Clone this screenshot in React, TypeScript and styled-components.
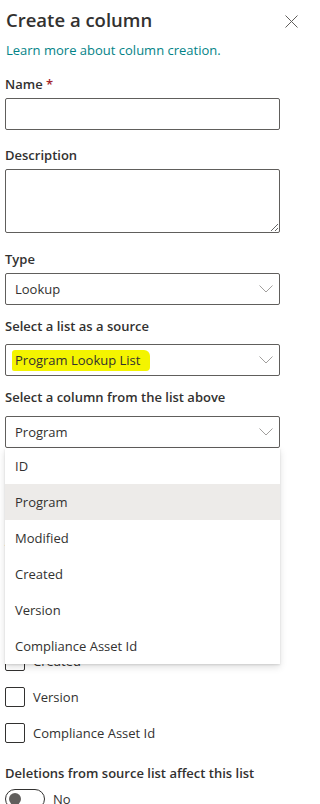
import React from "react";
import styled, { createGlobalStyle } from "styled-components";

const colors = {
  text: "#323130",
  border: "#605e5c",
  chevron: "#a19f9d",
  link: "#038387",
  hover: "#edebe9",
  required: "#a4262c",
  marker: "#f4f400",
};

const GlobalStyle = createGlobalStyle`
  html, body {
    margin: 0;
    padding: 0;
    background: #ffffff;
  }
  body {
    font-family: "Open Sans", "Noto Sans", sans-serif;
    color: ${colors.text};
    overflow: hidden;
  }
`;

const Chevron = () => (
  <svg width="14" height="8" viewBox="0 0 14 8" fill="none">
    <polyline points="0.5,0.5 7,7 13.5,0.5" stroke={colors.chevron} strokeWidth="1" />
  </svg>
);

const CloseIcon = () => (
  <svg width="13" height="13" viewBox="0 0 13 13" fill="none">
    <line x1="0.5" y1="0.5" x2="12.5" y2="12.5" stroke={colors.border} strokeWidth="1" />
    <line x1="12.5" y1="0.5" x2="0.5" y2="12.5" stroke={colors.border} strokeWidth="1" />
  </svg>
);

const columnOptions = ["ID", "Program", "Modified", "Created", "Version", "Compliance Asset Id"];
const extraFields = ["ID", "Modified", "Created", "Version", "Compliance Asset Id"];

const App = () => {
  return (
    <>
      <GlobalStyle />
      <Panel>
        <Header>
          <Title>Create a column</Title>
          <CloseButton aria-label="Close">
            <CloseIcon />
          </CloseButton>
        </Header>
        <LearnLink href="#">Learn more about column creation.</LearnLink>

        <Field $top={14}>
          <Label>
            Name <Required>*</Required>
          </Label>
          <TextInput type="text" />
        </Field>

        <Field $top={15}>
          <Label>Description</Label>
          <TextArea />
        </Field>

        <Field $top={16}>
          <Label>Type</Label>
          <Select>
            <span>Lookup</span>
            <Chevron />
          </Select>
        </Field>

        <Field $top={11}>
          <Label $bottom={8}>Select a list as a source</Label>
          <Select>
            <Marker>Program Lookup List</Marker>
            <Chevron />
          </Select>
        </Field>

        <Field $top={11}>
          <Label $bottom={9}>Select a column from the list above</Label>
          <DropdownWrap>
            <Select>
              <span>Program</span>
              <Chevron />
            </Select>
            <Menu>
              {columnOptions.map((option) => (
                <MenuItem key={option} $selected={option === "Program"}>
                  {option}
                </MenuItem>
              ))}
            </Menu>
          </DropdownWrap>
        </Field>

        <Field $top={83}>
          <Label $bottom={8}>Add a column to show each of these additional fields</Label>
          <CheckList>
            {extraFields.map((field) => (
              <CheckRow key={field}>
                <CheckBox />
                <span>{field}</span>
              </CheckRow>
            ))}
          </CheckList>
        </Field>

        <Field $top={20}>
          <Label $bottom={6}>Deletions from source list affect this list</Label>
          <ToggleRow>
            <ToggleTrack>
              <ToggleThumb />
            </ToggleTrack>
            <span>No</span>
          </ToggleRow>
        </Field>
      </Panel>
    </>
  );
};

const Panel = styled.div`
  width: 275px;
  padding: 6px 0 0 5px;
  display: flex;
  flex-direction: column;
`;

const Header = styled.div`
  display: flex;
  justify-content: space-between;
  align-items: center;
  height: 28px;
`;

const Title = styled.h1`
  margin: 0 0 0 1px;
  font-size: 18.5px;
  line-height: 28px;
  font-weight: 600;
  color: ${colors.text};
`;

const CloseButton = styled.button`
  border: none;
  background: transparent;
  padding: 0;
  margin-right: -18px;
  margin-top: 3px;
  display: flex;
  cursor: pointer;
`;

const LearnLink = styled.a`
  margin: 6px 0 0 1px;
  font-size: 13px;
  line-height: 20px;
  color: ${colors.link};
  text-decoration: none;
`;

const Field = styled.div<{ $top: number }>`
  display: flex;
  flex-direction: column;
  margin-top: ${(p) => p.$top}px;
`;

const Label = styled.label<{ $bottom?: number }>`
  font-size: 13px;
  line-height: 20px;
  font-weight: 600;
  color: ${colors.text};
  margin-bottom: ${(p) => p.$bottom ?? 4}px;
`;

const Required = styled.span`
  color: ${colors.required};
`;

const TextInput = styled.input`
  box-sizing: border-box;
  width: 275px;
  height: 32px;
  border: 1px solid ${colors.border};
  border-radius: 2px;
  outline: none;
  padding: 0 8px;
  font-family: inherit;
  font-size: 13px;
`;

const TextArea = styled.textarea`
  box-sizing: border-box;
  width: 275px;
  height: 64px;
  border: 1px solid ${colors.border};
  border-radius: 2px;
  outline: none;
  padding: 6px 8px;
  font-family: inherit;
  font-size: 13px;
  resize: vertical;
  display: block;
`;

const Select = styled.div`
  box-sizing: border-box;
  width: 275px;
  height: 32px;
  border: 1px solid ${colors.border};
  border-radius: 2px;
  display: flex;
  align-items: center;
  justify-content: space-between;
  padding: 0 6px 0 9px;
  font-size: 13px;
  color: ${colors.text};
`;

const Marker = styled.span`
  background: ${colors.marker};
  margin-left: -3px;
  padding: 1px 10px 2px 3px;
  border-radius: 3px 6px 4px 2px;
`;

const DropdownWrap = styled.div`
  position: relative;
`;

const Menu = styled.ul`
  position: absolute;
  top: 100%;
  left: 0;
  z-index: 5;
  width: 275px;
  margin: 0;
  padding: 0;
  list-style: none;
  background: #ffffff;
  box-shadow: 0 3.2px 7.2px rgba(0, 0, 0, 0.132), 0 0.6px 1.8px rgba(0, 0, 0, 0.108);
`;

const MenuItem = styled.li<{ $selected?: boolean }>`
  height: 36px;
  line-height: 36px;
  padding-left: 10px;
  font-size: 13px;
  color: ${colors.text};
  background: ${(p) => (p.$selected ? colors.hover : "transparent")};
`;

const CheckList = styled.div`
  display: flex;
  flex-direction: column;
  gap: 16px;
`;

const CheckRow = styled.label`
  display: flex;
  align-items: center;
  gap: 8px;
  height: 20px;
  font-size: 13px;
  color: ${colors.text};
`;

const CheckBox = styled.span`
  box-sizing: border-box;
  width: 20px;
  height: 20px;
  border: 1px solid ${colors.text};
  border-radius: 2px;
`;

const ToggleRow = styled.div`
  display: flex;
  align-items: center;
  gap: 8px;
  font-size: 13px;
  color: ${colors.text};
`;

const ToggleTrack = styled.span`
  box-sizing: border-box;
  width: 40px;
  height: 20px;
  border: 1px solid ${colors.text};
  border-radius: 10px;
  display: flex;
  align-items: center;
  padding: 0 3px;
`;

const ToggleThumb = styled.span`
  width: 12px;
  height: 12px;
  border-radius: 50%;
  background: ${colors.border};
`;

export default App;
